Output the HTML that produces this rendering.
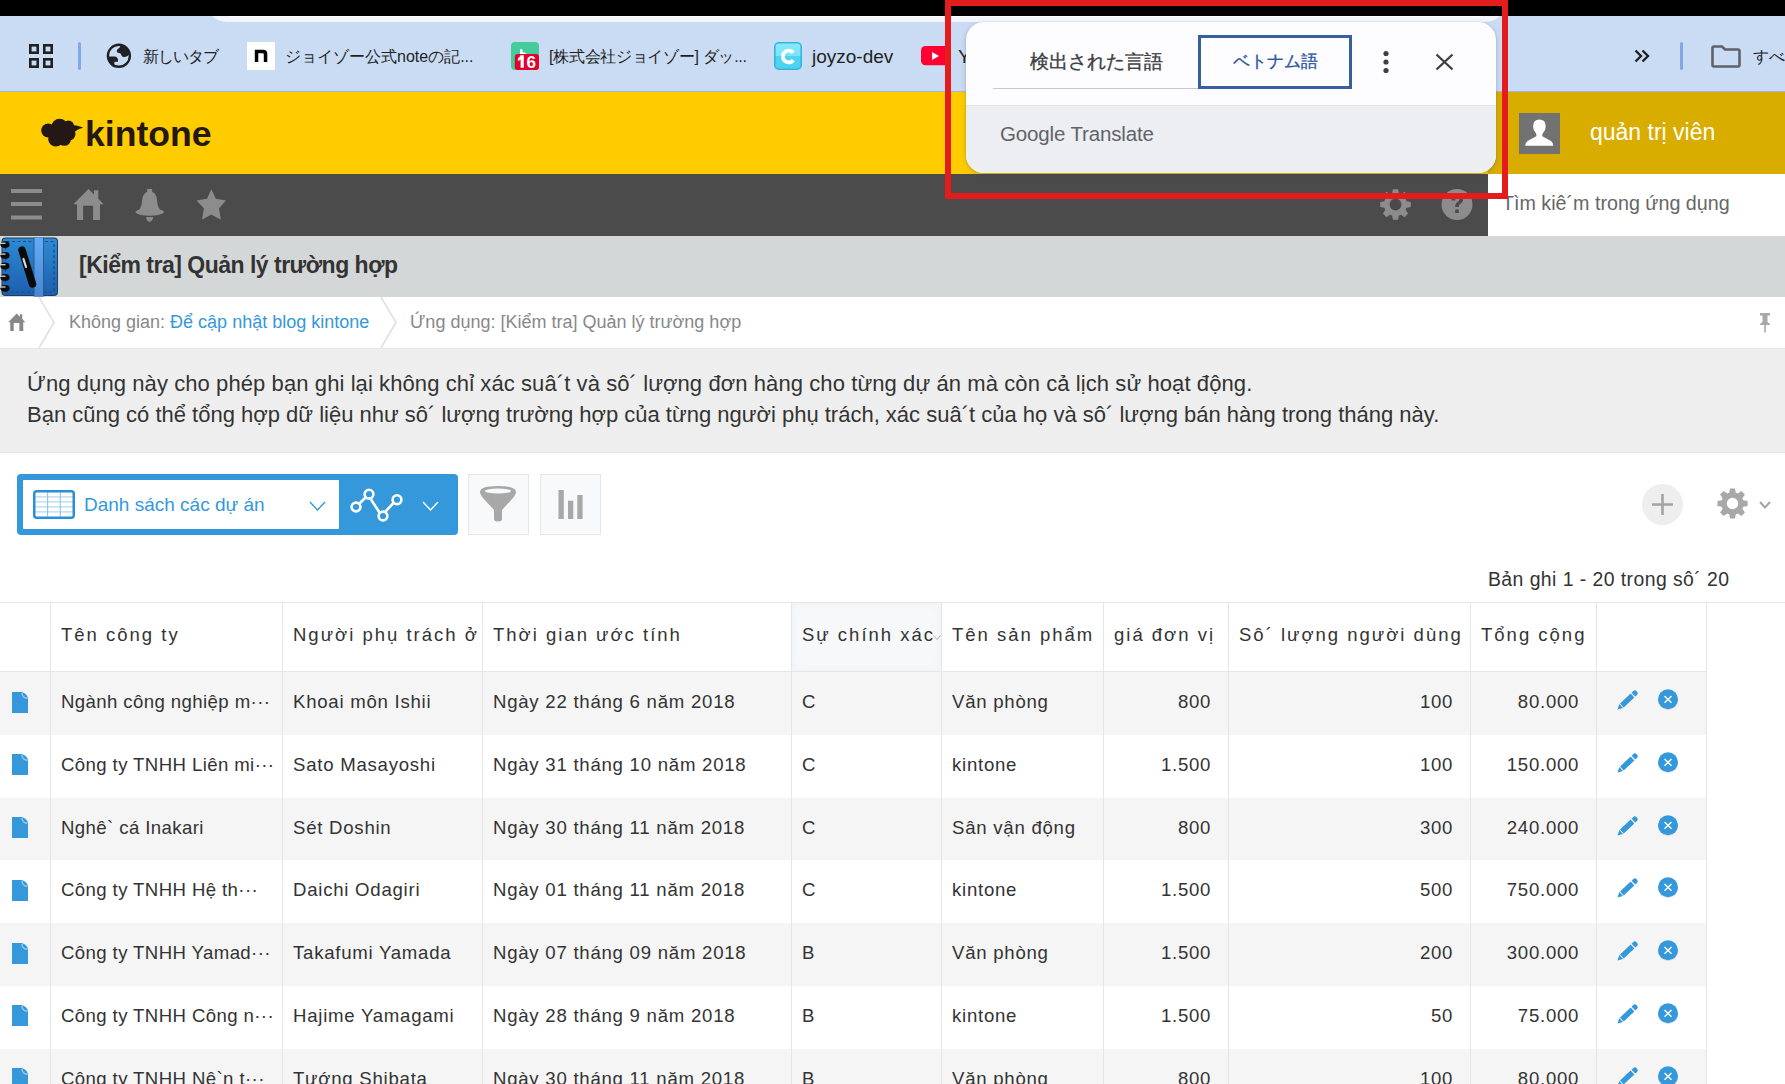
<!DOCTYPE html>
<html><head><meta charset="utf-8">
<style>
*{box-sizing:border-box}
html,body{margin:0;padding:0}
body{width:1785px;height:1084px;overflow:hidden;position:relative;background:#fff;font-family:"Liberation Sans",sans-serif;color:#333}
.a{position:absolute}
.nw{white-space:nowrap}
svg{display:block}
</style></head><body>

<!-- browser chrome -->
<div class="a" style="left:0;top:0;width:1785px;height:16px;background:#000"></div>
<div class="a" style="left:0;top:16px;width:1785px;height:76px;background:#cadbf4;border-bottom:1px solid #a3b4dc"></div>
<!-- active tab bottom strip -->
<div class="a" style="left:228px;top:16px;width:1256px;height:6px;background:#f2f5fb;border-top:1px solid #fff"></div>
<svg class="a" style="left:212px;top:16px" width="17" height="7"><path d="M0 0 H17 V6 Q6 6 0 0Z" fill="#f2f5fb"/></svg>
<svg class="a" style="left:1483px;top:16px" width="17" height="7"><path d="M0 0 H17 Q11 6 0 6Z" fill="#f2f5fb"/></svg>

<!-- apps grid -->
<svg class="a" style="left:29px;top:44px" width="24" height="24"><g fill="none" stroke="#202124" stroke-width="2.6"><rect x="1.3" y="1.3" width="7.4" height="7.4"/><rect x="15.3" y="1.3" width="7.4" height="7.4"/><rect x="1.3" y="15.3" width="7.4" height="7.4"/><rect x="15.3" y="15.3" width="7.4" height="7.4"/></g></svg>
<div class="a" style="left:78px;top:42px;width:3px;height:28px;border-radius:2px;background:#7fa8ea"></div>
<!-- globe -->
<svg class="a" style="left:106px;top:43px" width="26" height="26"><circle cx="12.9" cy="12.8" r="11" fill="none" stroke="#202124" stroke-width="2.4"/><path d="M14.5 2 Q14.5 4.5 12.5 5.5 Q10.5 6.5 10.8 8.5 Q11 10 13.5 10 Q15 10.3 15.5 12.5 Q16.5 14.5 19 14 Q22 13.5 24 10.5 Q22 3.5 14.5 2Z" fill="#202124"/><path d="M1.3 13.5 H8.5 Q12 13.8 12 17.5 V18.8 H9 Q8.3 18.8 8.3 20 V24.5 Q2.5 21.5 1.3 13.5Z" fill="#202124"/></svg>
<div class="a nw" style="left:143px;top:44px;font-size:16px;letter-spacing:-1px;line-height:26px;color:#1f1f1f">新しいタブ</div>
<!-- note icon -->
<div class="a" style="left:247px;top:42px;width:28px;height:28px;background:#fff"></div>
<svg class="a" style="left:247px;top:42px" width="28" height="28"><path d="M7.8 20 V7.8 H16 Q20.3 7.8 20.3 12 V20 H16.8 V12.6 Q16.8 11.3 15.5 11.3 H11.3 V20Z" fill="#000"/></svg>
<div class="a nw" style="left:285px;top:44px;font-size:16px;line-height:26px;color:#1f1f1f">ジョイゾー公式noteの記...</div>
<!-- 16 icon -->
<svg class="a" style="left:511px;top:42px" width="28" height="28"><rect x="0" y="0" width="28" height="28" rx="4" fill="#44cc9c"/><path d="M9 7.2 H11.5 V10 Q14.5 10.5 17 12.5 H9Z" fill="#fff"/><rect x="3.8" y="12" width="24.2" height="16" rx="3" fill="#e5002b"/><path d="M9.5 13.2 H12.8 V25.7 H9.6 V17.5 Q8.3 18.5 6.9 19 V16.3 Q8.8 15.3 9.5 13.2Z" fill="#fff"/><text x="20.3" y="25.8" style="font-family:'Liberation Sans';font-weight:bold" font-size="17" fill="#fff" text-anchor="middle">6</text></svg>
<div class="a nw" style="left:549px;top:44px;font-size:16px;letter-spacing:-0.3px;line-height:26px;color:#1f1f1f">[株式会社ジョイゾー] ダッ...</div>
<!-- C icon -->
<svg class="a" style="left:774px;top:42px" width="28" height="28"><defs><linearGradient id="cg" x1="0" y1="0" x2="0" y2="1"><stop offset="0" stop-color="#86e8fb"/><stop offset="0.5" stop-color="#7fe2f7"/><stop offset="0.5" stop-color="#4fd5f1"/><stop offset="1" stop-color="#4cd3ef"/></linearGradient></defs><rect x="0.8" y="0.8" width="26.4" height="26.4" rx="4" fill="url(#cg)" stroke="#35b6d6" stroke-width="1.6"/><path d="M19.3 10.8 A5.9 5.9 0 1 0 19.3 18.2" fill="none" stroke="#fff" stroke-width="3.8"/></svg>
<div class="a nw" style="left:812px;top:44px;font-size:19px;line-height:26px;color:#1f1f1f">joyzo-dev</div>
<!-- youtube -->
<svg class="a" style="left:921px;top:46px" width="28" height="20"><rect width="28" height="19.3" rx="4.5" fill="#ff0033"/><path d="M11 6 V14 L18 10Z" fill="#fff"/></svg>
<div class="a nw" style="left:958px;top:44px;font-size:19px;line-height:26px;color:#1f1f1f">Y</div>
<!-- right side -->
<svg class="a" style="left:1634px;top:49px" width="17" height="14"><path d="M1.5 1.5 L7 7 L1.5 12.5 M8.5 1.5 L14 7 L8.5 12.5" fill="none" stroke="#202124" stroke-width="2.4"/></svg>
<div class="a" style="left:1680px;top:42px;width:3px;height:28px;border-radius:2px;background:#7fa8ea"></div>
<svg class="a" style="left:1711px;top:45px" width="30" height="23"><path d="M1.5 3 Q1.5 1.5 3 1.5 H11 L14 4.5 H27 Q28.5 4.5 28.5 6 V20 Q28.5 21.5 27 21.5 H3 Q1.5 21.5 1.5 20Z" fill="none" stroke="#5f6368" stroke-width="2.6"/></svg>
<div class="a nw" style="left:1753px;top:44px;font-size:16px;line-height:26px;color:#1f1f1f">すべ</div>


<!-- kintone header -->
<div class="a" style="left:0;top:92px;width:1785px;height:82px;background:#ffcc00"></div>
<div class="a" style="left:1488px;top:92px;width:297px;height:82px;background:#d8ad00"></div>
<svg class="a" style="left:40px;top:117px" width="46" height="32"><g fill="#231815"><circle cx="8.2" cy="13.5" r="7"/><circle cx="19.6" cy="9.8" r="8.1"/><circle cx="28.5" cy="9" r="5.5"/><circle cx="29.2" cy="17.1" r="6.3"/><circle cx="15.9" cy="21.9" r="7.7"/><circle cx="24.4" cy="22.3" r="6.5"/><circle cx="20" cy="16" r="9"/><path d="M30 7.5 Q38 8.6 43.2 10.5 Q38 11.5 33 16Z"/></g></svg>
<div class="a nw" style="left:85px;top:112px;font-size:35.6px;font-weight:bold;line-height:44px;color:#231815">kintone</div>
<!-- user -->
<div class="a" style="left:1519px;top:113px;width:41px;height:41px;background:#717271;overflow:hidden"><svg width="41" height="41"><path d="M20.4 6.6 Q26.7 6.6 26.7 13.5 Q26.7 17.5 24 20 Q23 21.2 23.3 23.3 L32 28 Q34.2 29.5 34.2 32.7 H6.2 Q6.2 29.5 8.6 28 L17.3 23.3 Q17.8 21.2 16.8 20 Q14.1 17.5 14.1 13.5 Q14.1 6.6 20.4 6.6Z" fill="#fff"/></svg></div>
<div class="a nw" style="left:1590px;top:118px;font-size:23px;line-height:28px;color:#fff">quản trị viên</div>

<!-- nav -->
<div class="a" style="left:0;top:174px;width:1488px;height:62px;background:#4b4b4b"></div>
<div class="a" style="left:1488px;top:174px;width:297px;height:62px;background:#fff"></div>
<svg class="a" style="left:11px;top:188px" width="32" height="33"><g fill="#8c8c8c"><rect x="0" y="1" width="31" height="4"/><rect x="0" y="14" width="31" height="4"/><rect x="0" y="27.5" width="31" height="4"/></g></svg>
<svg class="a" style="left:73px;top:188px" width="31" height="33"><path d="M15.5 1 L21 6.5 V2.3 H25.3 V10.8 L30.7 16.2 H27 V32 H20.1 V17.8 H10.1 V32 H4 V16.2 H0.3Z" fill="#8c8c8c"/></svg>
<svg class="a" style="left:135px;top:188px" width="30" height="35"><path transform="scale(1 1.07)" d="M12.2 1 H17.1 V3.4 Q21.5 5 22 11 Q22.5 18 25 20 Q29.5 21.5 29 23 Q25 26 14.6 26 Q4.2 26 0.3 23 Q0 21.5 4.2 20 Q6.7 18 7.2 11 Q7.7 5 12.2 3.4Z M11 27 H18.2 Q17.5 31.5 14.6 31.5 Q11.7 31.5 11 27Z" fill="#8c8c8c"/></svg>
<svg class="a" style="left:196px;top:188px" width="31" height="33"><path d="M15.3 1.2 L19.9 10.8 L30 12.6 L23 20.3 L24.8 31.7 L15.3 26.5 L6 31.7 L7.9 20.3 L0.5 12.6 L11 10.8Z" fill="#8c8c8c"/></svg>
<svg class="a" style="left:1379px;top:188px" width="33" height="33"><path d="M13.15 5.39 L13.91 1.22 L19.09 1.22 L19.85 5.39 A11.6 11.6 0 0 1 21.98 6.28 L25.48 3.86 L29.14 7.52 L26.72 11.02 A11.6 11.6 0 0 1 27.61 13.15 L31.78 13.91 L31.78 19.09 L27.61 19.85 A11.6 11.6 0 0 1 26.72 21.98 L29.14 25.48 L25.48 29.14 L21.98 26.72 A11.6 11.6 0 0 1 19.85 27.61 L19.09 31.78 L13.91 31.78 L13.15 27.61 A11.6 11.6 0 0 1 11.02 26.72 L7.52 29.14 L3.86 25.48 L6.28 21.98 A11.6 11.6 0 0 1 5.39 19.85 L1.22 19.09 L1.22 13.91 L5.39 13.15 A11.6 11.6 0 0 1 6.28 11.02 L3.86 7.52 L7.52 3.86 L11.02 6.28 A11.6 11.6 0 0 1 13.15 5.39Z M22.4 16.5 A5.9 5.9 0 1 0 10.6 16.5 A5.9 5.9 0 1 0 22.4 16.5Z" fill="#8c8c8c" fill-rule="evenodd"/></svg>
<svg class="a" style="left:1441px;top:188px" width="33" height="33"><circle cx="16" cy="16.5" r="15.5" fill="#8c8c8c"/><path d="M10.5 12.5 Q10.5 6.5 16.5 6.5 Q22 6.5 22 11.5 Q22 14.5 19 16 Q17.8 16.8 17.8 19 H14.2 Q14.2 15.2 16.5 14 Q18.3 13 18.3 11.5 Q18.3 9.8 16.3 9.8 Q14.2 9.8 14.2 12.5Z M14.2 21.5 H17.8 V25 H14.2Z" fill="#4b4b4b"/></svg>
<div class="a nw" style="left:1502px;top:190px;font-size:19.7px;line-height:26px;color:#666">Tìm kiê´m trong ứng dụng</div>

<!-- title bar -->
<div class="a" style="left:0;top:236px;width:1785px;height:61px;background:#d4d7d8"></div>
<svg class="a" style="left:0;top:237px" width="59" height="60" viewBox="0 0 59 60">
<defs><linearGradient id="nb" x1="0" y1="0" x2="0" y2="1"><stop offset="0" stop-color="#2d8ad3"/><stop offset="1" stop-color="#1d5fae"/></linearGradient>
<linearGradient id="st" x1="0" y1="0" x2="0" y2="1"><stop offset="0" stop-color="#62adf7"/><stop offset="1" stop-color="#4a86d2"/></linearGradient></defs>
<rect x="1.5" y="0.5" width="56.5" height="58.5" rx="4" fill="#1f3d60"/>
<rect x="2.5" y="1.5" width="54.5" height="56.5" rx="3" fill="url(#nb)"/>
<rect x="5.5" y="4.5" width="48.5" height="50.5" rx="1" fill="none" stroke="#174a82" stroke-width="1.2" stroke-dasharray="3 2.5"/>
<rect x="33.5" y="0.5" width="10.5" height="59" fill="#2a5a90"/>
<rect x="34.5" y="0.5" width="8.5" height="59" fill="url(#st)"/>
<path d="M22 13 L32.5 47" stroke="#0a0a0a" stroke-width="7.5" stroke-linecap="round"/><path d="M23.5 22 L26 30" stroke="#f0f0f0" stroke-width="2.2" stroke-linecap="round" opacity="0.9"/>
<g fill="#0d0d0d"><ellipse cx="5" cy="7.6" rx="4.6" ry="3.4"/><ellipse cx="5" cy="18.4" rx="4.6" ry="3.4"/><ellipse cx="5" cy="29" rx="4.6" ry="3.4"/><ellipse cx="5" cy="40.5" rx="4.6" ry="3.4"/><ellipse cx="5" cy="51.3" rx="4.6" ry="3.4"/></g>
<g fill="none" stroke="#d8d8d8" stroke-width="1.3"><path d="M0 6.3 H5.5"/><path d="M0 17.1 H5.5"/><path d="M0 27.7 H5.5"/><path d="M0 39.2 H5.5"/><path d="M0 50 H5.5"/></g>
</svg>
<div class="a nw" style="left:79px;top:250px;font-size:23px;font-weight:bold;letter-spacing:-0.5px;line-height:30px;color:#333">[Kiểm tra] Quản lý trường hợp</div>

<!-- breadcrumb -->
<div class="a" style="left:0;top:297px;width:1785px;height:52px;background:#fff;border-bottom:1px solid #e3e7e8"></div>
<svg class="a" style="left:8px;top:313px" width="18" height="20"><path transform="scale(0.565)" d="M15.5 1 L21 6.5 V2.3 H25.3 V10.8 L30.7 16.2 H27 V32 H20.1 V17.8 H10.1 V32 H4 V16.2 H0.3Z" fill="#888"/></svg>
<svg class="a" style="left:38px;top:297px" width="18" height="52"><path d="M1 0 L16 25.5 L1 51" fill="none" stroke="#dfe3e4" stroke-width="1.7"/></svg>
<div class="a nw" style="left:69px;top:310px;font-size:18px;line-height:24px;color:#888">Không gian: <span style="color:#3498db">Để cập nhật blog kintone</span></div>
<svg class="a" style="left:380px;top:297px" width="18" height="52"><path d="M1 0 L16 25.5 L1 51" fill="none" stroke="#dfe3e4" stroke-width="1.7"/></svg>
<div class="a nw" style="left:410px;top:310px;font-size:18px;line-height:24px;color:#888">Ứng dụng: [Kiểm tra] Quản lý trường hợp</div>
<svg class="a" style="left:1760px;top:313px" width="10" height="20"><path d="M0 0 H10 V2.5 H7.5 V9 L10 11 V12 H5.8 V19.5 H4.2 V12 H0 V11 L2.5 9 V2.5 H0Z" fill="#a8a8a8"/></svg>

<!-- description -->
<div class="a" style="left:0;top:349px;width:1785px;height:104px;background:#eeeeee;border-bottom:1px solid #e3e7e8"></div>
<div class="a nw" style="left:27px;top:368px;font-size:22px;line-height:31px;color:#333"><span style="letter-spacing:0.09px">Ứng dụng này cho phép bạn ghi lại không chỉ xác suâ´t và sô´ lượng đơn hàng cho từng dự án mà còn cả lịch sử hoạt động.</span><br>Bạn cũng có thể tổng hợp dữ liệu như sô´ lượng trường hợp của từng người phụ trách, xác suâ´t của họ và sô´ lượng bán hàng trong tháng này.</div>


<!-- toolbar -->
<div class="a" style="left:17px;top:474px;width:441px;height:61px;background:#3498db;border-radius:4px"></div>
<div class="a" style="left:23px;top:480px;width:316px;height:49px;background:#fff;border-radius:1px"></div>
<svg class="a" style="left:33px;top:490px" width="42" height="29"><g stroke="#b3d7f0" stroke-width="1.3"><path d="M2 6.9 H40 M2 11.9 H40 M2 16.9 H40 M2 21.9 H40"/></g><g stroke="#8fc4ec" stroke-width="1.1"><path d="M14.6 2 V27 M27.3 2 V27"/></g><rect x="1.25" y="1.25" width="39.5" height="26.5" rx="2.5" fill="none" stroke="#2a8fd8" stroke-width="2.5"/></svg>
<div class="a nw" style="left:84px;top:492px;font-size:19px;line-height:26px;color:#3498db">Danh sách các dự án</div>
<svg class="a" style="left:309px;top:501px" width="17" height="10"><path d="M1 1 L8.5 9 L16 1" fill="none" stroke="#3498db" stroke-width="1.4"/></svg>
<svg class="a" style="left:349px;top:488px" width="55" height="35"><g fill="none" stroke="#fff" stroke-width="2.6"><path d="M10 16 L16.5 9.5 M22 11.5 L30.5 24.5 M36.5 23.5 L44.5 15"/><circle cx="7" cy="19" r="4.4"/><circle cx="20" cy="6.2" r="4.4"/><circle cx="34" cy="28" r="4.4"/><circle cx="48" cy="11.7" r="4.4"/></g></svg>
<svg class="a" style="left:422px;top:501px" width="17" height="10"><path d="M1 1 L8.5 9 L16 1" fill="none" stroke="#fff" stroke-width="1.4"/></svg>
<div class="a" style="left:468px;top:474px;width:61px;height:61px;background:#f7f9fa;border:1px solid #e3e7e8"></div>
<svg class="a" style="left:479px;top:485px" width="38" height="38"><path d="M1 7 Q1 1 19 1 Q37 1 37 7 Q37 9 34 13 L23 25 V34 Q23 36.5 19 36.5 Q15 36.5 15 34 V25 L4 13 Q1 9 1 7Z" fill="#a8a8a8"/><ellipse cx="19" cy="6" rx="13" ry="2.6" fill="#f7f9fa"/></svg>
<div class="a" style="left:540px;top:474px;width:61px;height:61px;background:#f7f9fa;border:1px solid #e3e7e8"></div>
<svg class="a" style="left:558px;top:489px" width="25" height="31"><g fill="#a8a8a8"><rect x="0.5" y="1" width="5.3" height="29"/><rect x="10" y="11.7" width="5.3" height="18.3"/><rect x="19.3" y="6" width="5.3" height="24"/></g></svg>
<div class="a" style="left:1642px;top:484px;width:41px;height:41px;border-radius:50%;background:#eeeeee"></div>
<svg class="a" style="left:1652px;top:494px" width="21" height="21"><path d="M10.5 0 V21 M0 10.5 H21" stroke="#a3a3a3" stroke-width="2.6"/></svg>
<svg class="a" style="left:1716px;top:487px" width="33" height="33"><path d="M13.25 5.78 L14.01 1.40 L18.99 1.40 L19.75 5.78 A11.2 11.2 0 0 1 21.78 6.62 L25.41 4.07 L28.93 7.59 L26.38 11.22 A11.2 11.2 0 0 1 27.22 13.25 L31.60 14.01 L31.60 18.99 L27.22 19.75 A11.2 11.2 0 0 1 26.38 21.78 L28.93 25.41 L25.41 28.93 L21.78 26.38 A11.2 11.2 0 0 1 19.75 27.22 L18.99 31.60 L14.01 31.60 L13.25 27.22 A11.2 11.2 0 0 1 11.22 26.38 L7.59 28.93 L4.07 25.41 L6.62 21.78 A11.2 11.2 0 0 1 5.78 19.75 L1.40 18.99 L1.40 14.01 L5.78 13.25 A11.2 11.2 0 0 1 6.62 11.22 L4.07 7.59 L7.59 4.07 L11.22 6.62 A11.2 11.2 0 0 1 13.25 5.78Z M22.2 16.5 A5.7 5.7 0 1 0 10.8 16.5 A5.7 5.7 0 1 0 22.2 16.5Z" fill="#a8a8a8" fill-rule="evenodd"/></svg>
<svg class="a" style="left:1759px;top:501px" width="12" height="8"><path d="M1 1 L6 6.5 L11 1" fill="none" stroke="#a3a3a3" stroke-width="2"/></svg>
<div class="a nw" style="left:1488px;top:566px;font-size:19.4px;letter-spacing:0.44px;line-height:26px;color:#333">Bản ghi 1 - 20 trong sô´ 20</div>

<!--TABLE-->
<div class="a" style="left:0;top:602px;width:1785px;height:1px;background:#e3e7e8"></div>
<div class="a" style="left:792px;top:603px;width:149px;height:68px;background:#f7f8fa;box-shadow:inset 0 0 8px #eef0f2"></div>
<div class="a" style="left:0;top:671px;width:1706px;height:1px;background:#e3e7e8"></div>
<div class="a" style="left:0;top:672.00px;width:1706px;height:62.75px;background:#f5f5f5"></div>
<div class="a" style="left:0;top:734.75px;width:1706px;height:62.75px;background:#fff"></div>
<div class="a" style="left:0;top:797.50px;width:1706px;height:62.75px;background:#f5f5f5"></div>
<div class="a" style="left:0;top:860.25px;width:1706px;height:62.75px;background:#fff"></div>
<div class="a" style="left:0;top:923.00px;width:1706px;height:62.75px;background:#f5f5f5"></div>
<div class="a" style="left:0;top:985.75px;width:1706px;height:62.75px;background:#fff"></div>
<div class="a" style="left:0;top:1048.50px;width:1706px;height:62.75px;background:#f5f5f5"></div>
<div class="a" style="left:50px;top:603px;width:1px;height:482px;background:#e3e7e8"></div>
<div class="a" style="left:282px;top:603px;width:1px;height:482px;background:#e3e7e8"></div>
<div class="a" style="left:482px;top:603px;width:1px;height:482px;background:#e3e7e8"></div>
<div class="a" style="left:791px;top:603px;width:1px;height:482px;background:#e3e7e8"></div>
<div class="a" style="left:941px;top:603px;width:1px;height:482px;background:#e3e7e8"></div>
<div class="a" style="left:1103px;top:603px;width:1px;height:482px;background:#e3e7e8"></div>
<div class="a" style="left:1228px;top:603px;width:1px;height:482px;background:#e3e7e8"></div>
<div class="a" style="left:1470px;top:603px;width:1px;height:482px;background:#e3e7e8"></div>
<div class="a" style="left:1596px;top:603px;width:1px;height:482px;background:#e3e7e8"></div>
<div class="a" style="left:1706px;top:603px;width:1px;height:482px;background:#e3e7e8"></div>
<div class="a nw" style="left:61px;top:623px;font-size:18.5px;letter-spacing:2px;line-height:24px;color:#333">Tên công ty</div>
<div class="a nw" style="left:293px;top:623px;font-size:18.5px;letter-spacing:2px;line-height:24px;color:#333">Người phụ trách ở</div>
<div class="a nw" style="left:493px;top:623px;font-size:18.5px;letter-spacing:2px;line-height:24px;color:#333">Thời gian ước tính</div>
<div class="a nw" style="left:802px;top:623px;font-size:18.5px;letter-spacing:2px;line-height:24px;color:#333">Sự chính xác</div>
<div class="a nw" style="left:952px;top:623px;font-size:18.5px;letter-spacing:2px;line-height:24px;color:#333">Tên sản phẩm</div>
<div class="a nw" style="left:1114px;top:623px;font-size:18.5px;letter-spacing:2px;line-height:24px;color:#333">giá đơn vị</div>
<div class="a nw" style="left:1239px;top:623px;font-size:18.5px;letter-spacing:2px;line-height:24px;color:#333">Sô´ lượng người dùng</div>
<div class="a nw" style="left:1481px;top:623px;font-size:18.5px;letter-spacing:2px;line-height:24px;color:#333">Tổng cộng</div>
<svg class="a" style="left:933px;top:635px" width="8" height="6"><path d="M0.5 0.5 L4 4.5 L7.5 0.5" fill="none" stroke="#b0b0b0" stroke-width="1"/></svg>
<svg class="a" style="left:12px;top:691.50px" width="17" height="22"><path d="M0 0 H9.5 Q15.5 1.5 16 6.5 V21 H0Z" fill="#3498db"/><path d="M9.8 1 Q10.5 6 15.5 6.3" fill="none" stroke="#9fcbef" stroke-width="1.4"/></svg>
<div class="a nw" style="left:61px;top:689.00px;font-size:18.6px;letter-spacing:0.4px;line-height:26px;color:#333">Ngành công nghiệp m···</div>
<div class="a nw" style="left:293px;top:689.00px;font-size:18.6px;letter-spacing:0.75px;line-height:26px;color:#333">Khoai môn Ishii</div>
<div class="a nw" style="left:493px;top:689.00px;font-size:18.6px;letter-spacing:0.75px;line-height:26px;color:#333">Ngày 22 tháng 6 năm 2018</div>
<div class="a nw" style="left:802px;top:689.00px;font-size:18.6px;letter-spacing:0.75px;line-height:26px;color:#333">C</div>
<div class="a nw" style="left:952px;top:689.00px;font-size:18.6px;letter-spacing:0.75px;line-height:26px;color:#333">Văn phòng</div>
<div class="a nw" style="right:573.8px;top:689.00px;font-size:18.6px;letter-spacing:0.75px;line-height:26px;color:#333">800</div>
<div class="a nw" style="right:331.8px;top:689.00px;font-size:18.6px;letter-spacing:0.75px;line-height:26px;color:#333">100</div>
<div class="a nw" style="right:205.8px;top:689.00px;font-size:18.6px;letter-spacing:0.75px;line-height:26px;color:#333">80.000</div>
<svg class="a" style="left:1614px;top:689.00px" width="28" height="24"><g transform="translate(3.5 20.5) rotate(-43)"><path d="M0 0 L5 -2.7 V2.7Z" fill="#3498db"/><rect x="6" y="-2.7" width="14.5" height="5.4" fill="#3498db"/><path d="M21.8 -2.7 H24.5 Q26.5 -2.7 26.5 0 Q26.5 2.7 24.5 2.7 H21.8Z" fill="#3498db"/></g></svg>
<svg class="a" style="left:1657px;top:689.00px" width="23" height="23"><circle cx="11" cy="11.2" r="10" fill="#c9b9a9" opacity="0.35"/><circle cx="11" cy="10.3" r="10" fill="#3498db"/><path d="M7.5 7 L14.5 13.7 M14.5 7 L7.5 13.7" stroke="#fff" stroke-width="1.4"/></svg>
<svg class="a" style="left:12px;top:754.25px" width="17" height="22"><path d="M0 0 H9.5 Q15.5 1.5 16 6.5 V21 H0Z" fill="#3498db"/><path d="M9.8 1 Q10.5 6 15.5 6.3" fill="none" stroke="#9fcbef" stroke-width="1.4"/></svg>
<div class="a nw" style="left:61px;top:751.75px;font-size:18.6px;letter-spacing:0.4px;line-height:26px;color:#333">Công ty TNHH Liên mi···</div>
<div class="a nw" style="left:293px;top:751.75px;font-size:18.6px;letter-spacing:0.75px;line-height:26px;color:#333">Sato Masayoshi</div>
<div class="a nw" style="left:493px;top:751.75px;font-size:18.6px;letter-spacing:0.75px;line-height:26px;color:#333">Ngày 31 tháng 10 năm 2018</div>
<div class="a nw" style="left:802px;top:751.75px;font-size:18.6px;letter-spacing:0.75px;line-height:26px;color:#333">C</div>
<div class="a nw" style="left:952px;top:751.75px;font-size:18.6px;letter-spacing:0.75px;line-height:26px;color:#333">kintone</div>
<div class="a nw" style="right:573.8px;top:751.75px;font-size:18.6px;letter-spacing:0.75px;line-height:26px;color:#333">1.500</div>
<div class="a nw" style="right:331.8px;top:751.75px;font-size:18.6px;letter-spacing:0.75px;line-height:26px;color:#333">100</div>
<div class="a nw" style="right:205.8px;top:751.75px;font-size:18.6px;letter-spacing:0.75px;line-height:26px;color:#333">150.000</div>
<svg class="a" style="left:1614px;top:751.75px" width="28" height="24"><g transform="translate(3.5 20.5) rotate(-43)"><path d="M0 0 L5 -2.7 V2.7Z" fill="#3498db"/><rect x="6" y="-2.7" width="14.5" height="5.4" fill="#3498db"/><path d="M21.8 -2.7 H24.5 Q26.5 -2.7 26.5 0 Q26.5 2.7 24.5 2.7 H21.8Z" fill="#3498db"/></g></svg>
<svg class="a" style="left:1657px;top:751.75px" width="23" height="23"><circle cx="11" cy="11.2" r="10" fill="#c9b9a9" opacity="0.35"/><circle cx="11" cy="10.3" r="10" fill="#3498db"/><path d="M7.5 7 L14.5 13.7 M14.5 7 L7.5 13.7" stroke="#fff" stroke-width="1.4"/></svg>
<svg class="a" style="left:12px;top:817.00px" width="17" height="22"><path d="M0 0 H9.5 Q15.5 1.5 16 6.5 V21 H0Z" fill="#3498db"/><path d="M9.8 1 Q10.5 6 15.5 6.3" fill="none" stroke="#9fcbef" stroke-width="1.4"/></svg>
<div class="a nw" style="left:61px;top:814.50px;font-size:18.6px;letter-spacing:0.4px;line-height:26px;color:#333">Nghê` cá Inakari</div>
<div class="a nw" style="left:293px;top:814.50px;font-size:18.6px;letter-spacing:0.75px;line-height:26px;color:#333">Sét Doshin</div>
<div class="a nw" style="left:493px;top:814.50px;font-size:18.6px;letter-spacing:0.75px;line-height:26px;color:#333">Ngày 30 tháng 11 năm 2018</div>
<div class="a nw" style="left:802px;top:814.50px;font-size:18.6px;letter-spacing:0.75px;line-height:26px;color:#333">C</div>
<div class="a nw" style="left:952px;top:814.50px;font-size:18.6px;letter-spacing:0.75px;line-height:26px;color:#333">Sân vận động</div>
<div class="a nw" style="right:573.8px;top:814.50px;font-size:18.6px;letter-spacing:0.75px;line-height:26px;color:#333">800</div>
<div class="a nw" style="right:331.8px;top:814.50px;font-size:18.6px;letter-spacing:0.75px;line-height:26px;color:#333">300</div>
<div class="a nw" style="right:205.8px;top:814.50px;font-size:18.6px;letter-spacing:0.75px;line-height:26px;color:#333">240.000</div>
<svg class="a" style="left:1614px;top:814.50px" width="28" height="24"><g transform="translate(3.5 20.5) rotate(-43)"><path d="M0 0 L5 -2.7 V2.7Z" fill="#3498db"/><rect x="6" y="-2.7" width="14.5" height="5.4" fill="#3498db"/><path d="M21.8 -2.7 H24.5 Q26.5 -2.7 26.5 0 Q26.5 2.7 24.5 2.7 H21.8Z" fill="#3498db"/></g></svg>
<svg class="a" style="left:1657px;top:814.50px" width="23" height="23"><circle cx="11" cy="11.2" r="10" fill="#c9b9a9" opacity="0.35"/><circle cx="11" cy="10.3" r="10" fill="#3498db"/><path d="M7.5 7 L14.5 13.7 M14.5 7 L7.5 13.7" stroke="#fff" stroke-width="1.4"/></svg>
<svg class="a" style="left:12px;top:879.75px" width="17" height="22"><path d="M0 0 H9.5 Q15.5 1.5 16 6.5 V21 H0Z" fill="#3498db"/><path d="M9.8 1 Q10.5 6 15.5 6.3" fill="none" stroke="#9fcbef" stroke-width="1.4"/></svg>
<div class="a nw" style="left:61px;top:877.25px;font-size:18.6px;letter-spacing:0.4px;line-height:26px;color:#333">Công ty TNHH Hệ th···</div>
<div class="a nw" style="left:293px;top:877.25px;font-size:18.6px;letter-spacing:0.75px;line-height:26px;color:#333">Daichi Odagiri</div>
<div class="a nw" style="left:493px;top:877.25px;font-size:18.6px;letter-spacing:0.75px;line-height:26px;color:#333">Ngày 01 tháng 11 năm 2018</div>
<div class="a nw" style="left:802px;top:877.25px;font-size:18.6px;letter-spacing:0.75px;line-height:26px;color:#333">C</div>
<div class="a nw" style="left:952px;top:877.25px;font-size:18.6px;letter-spacing:0.75px;line-height:26px;color:#333">kintone</div>
<div class="a nw" style="right:573.8px;top:877.25px;font-size:18.6px;letter-spacing:0.75px;line-height:26px;color:#333">1.500</div>
<div class="a nw" style="right:331.8px;top:877.25px;font-size:18.6px;letter-spacing:0.75px;line-height:26px;color:#333">500</div>
<div class="a nw" style="right:205.8px;top:877.25px;font-size:18.6px;letter-spacing:0.75px;line-height:26px;color:#333">750.000</div>
<svg class="a" style="left:1614px;top:877.25px" width="28" height="24"><g transform="translate(3.5 20.5) rotate(-43)"><path d="M0 0 L5 -2.7 V2.7Z" fill="#3498db"/><rect x="6" y="-2.7" width="14.5" height="5.4" fill="#3498db"/><path d="M21.8 -2.7 H24.5 Q26.5 -2.7 26.5 0 Q26.5 2.7 24.5 2.7 H21.8Z" fill="#3498db"/></g></svg>
<svg class="a" style="left:1657px;top:877.25px" width="23" height="23"><circle cx="11" cy="11.2" r="10" fill="#c9b9a9" opacity="0.35"/><circle cx="11" cy="10.3" r="10" fill="#3498db"/><path d="M7.5 7 L14.5 13.7 M14.5 7 L7.5 13.7" stroke="#fff" stroke-width="1.4"/></svg>
<svg class="a" style="left:12px;top:942.50px" width="17" height="22"><path d="M0 0 H9.5 Q15.5 1.5 16 6.5 V21 H0Z" fill="#3498db"/><path d="M9.8 1 Q10.5 6 15.5 6.3" fill="none" stroke="#9fcbef" stroke-width="1.4"/></svg>
<div class="a nw" style="left:61px;top:940.00px;font-size:18.6px;letter-spacing:0.4px;line-height:26px;color:#333">Công ty TNHH Yamad···</div>
<div class="a nw" style="left:293px;top:940.00px;font-size:18.6px;letter-spacing:0.75px;line-height:26px;color:#333">Takafumi Yamada</div>
<div class="a nw" style="left:493px;top:940.00px;font-size:18.6px;letter-spacing:0.75px;line-height:26px;color:#333">Ngày 07 tháng 09 năm 2018</div>
<div class="a nw" style="left:802px;top:940.00px;font-size:18.6px;letter-spacing:0.75px;line-height:26px;color:#333">B</div>
<div class="a nw" style="left:952px;top:940.00px;font-size:18.6px;letter-spacing:0.75px;line-height:26px;color:#333">Văn phòng</div>
<div class="a nw" style="right:573.8px;top:940.00px;font-size:18.6px;letter-spacing:0.75px;line-height:26px;color:#333">1.500</div>
<div class="a nw" style="right:331.8px;top:940.00px;font-size:18.6px;letter-spacing:0.75px;line-height:26px;color:#333">200</div>
<div class="a nw" style="right:205.8px;top:940.00px;font-size:18.6px;letter-spacing:0.75px;line-height:26px;color:#333">300.000</div>
<svg class="a" style="left:1614px;top:940.00px" width="28" height="24"><g transform="translate(3.5 20.5) rotate(-43)"><path d="M0 0 L5 -2.7 V2.7Z" fill="#3498db"/><rect x="6" y="-2.7" width="14.5" height="5.4" fill="#3498db"/><path d="M21.8 -2.7 H24.5 Q26.5 -2.7 26.5 0 Q26.5 2.7 24.5 2.7 H21.8Z" fill="#3498db"/></g></svg>
<svg class="a" style="left:1657px;top:940.00px" width="23" height="23"><circle cx="11" cy="11.2" r="10" fill="#c9b9a9" opacity="0.35"/><circle cx="11" cy="10.3" r="10" fill="#3498db"/><path d="M7.5 7 L14.5 13.7 M14.5 7 L7.5 13.7" stroke="#fff" stroke-width="1.4"/></svg>
<svg class="a" style="left:12px;top:1005.25px" width="17" height="22"><path d="M0 0 H9.5 Q15.5 1.5 16 6.5 V21 H0Z" fill="#3498db"/><path d="M9.8 1 Q10.5 6 15.5 6.3" fill="none" stroke="#9fcbef" stroke-width="1.4"/></svg>
<div class="a nw" style="left:61px;top:1002.75px;font-size:18.6px;letter-spacing:0.4px;line-height:26px;color:#333">Công ty TNHH Công n···</div>
<div class="a nw" style="left:293px;top:1002.75px;font-size:18.6px;letter-spacing:0.75px;line-height:26px;color:#333">Hajime Yamagami</div>
<div class="a nw" style="left:493px;top:1002.75px;font-size:18.6px;letter-spacing:0.75px;line-height:26px;color:#333">Ngày 28 tháng 9 năm 2018</div>
<div class="a nw" style="left:802px;top:1002.75px;font-size:18.6px;letter-spacing:0.75px;line-height:26px;color:#333">B</div>
<div class="a nw" style="left:952px;top:1002.75px;font-size:18.6px;letter-spacing:0.75px;line-height:26px;color:#333">kintone</div>
<div class="a nw" style="right:573.8px;top:1002.75px;font-size:18.6px;letter-spacing:0.75px;line-height:26px;color:#333">1.500</div>
<div class="a nw" style="right:331.8px;top:1002.75px;font-size:18.6px;letter-spacing:0.75px;line-height:26px;color:#333">50</div>
<div class="a nw" style="right:205.8px;top:1002.75px;font-size:18.6px;letter-spacing:0.75px;line-height:26px;color:#333">75.000</div>
<svg class="a" style="left:1614px;top:1002.75px" width="28" height="24"><g transform="translate(3.5 20.5) rotate(-43)"><path d="M0 0 L5 -2.7 V2.7Z" fill="#3498db"/><rect x="6" y="-2.7" width="14.5" height="5.4" fill="#3498db"/><path d="M21.8 -2.7 H24.5 Q26.5 -2.7 26.5 0 Q26.5 2.7 24.5 2.7 H21.8Z" fill="#3498db"/></g></svg>
<svg class="a" style="left:1657px;top:1002.75px" width="23" height="23"><circle cx="11" cy="11.2" r="10" fill="#c9b9a9" opacity="0.35"/><circle cx="11" cy="10.3" r="10" fill="#3498db"/><path d="M7.5 7 L14.5 13.7 M14.5 7 L7.5 13.7" stroke="#fff" stroke-width="1.4"/></svg>
<svg class="a" style="left:12px;top:1068.00px" width="17" height="22"><path d="M0 0 H9.5 Q15.5 1.5 16 6.5 V21 H0Z" fill="#3498db"/><path d="M9.8 1 Q10.5 6 15.5 6.3" fill="none" stroke="#9fcbef" stroke-width="1.4"/></svg>
<div class="a nw" style="left:61px;top:1065.50px;font-size:18.6px;letter-spacing:0.4px;line-height:26px;color:#333">Công ty TNHH Nê`n t···</div>
<div class="a nw" style="left:293px;top:1065.50px;font-size:18.6px;letter-spacing:0.75px;line-height:26px;color:#333">Tướng Shibata</div>
<div class="a nw" style="left:493px;top:1065.50px;font-size:18.6px;letter-spacing:0.75px;line-height:26px;color:#333">Ngày 30 tháng 11 năm 2018</div>
<div class="a nw" style="left:802px;top:1065.50px;font-size:18.6px;letter-spacing:0.75px;line-height:26px;color:#333">B</div>
<div class="a nw" style="left:952px;top:1065.50px;font-size:18.6px;letter-spacing:0.75px;line-height:26px;color:#333">Văn phòng</div>
<div class="a nw" style="right:573.8px;top:1065.50px;font-size:18.6px;letter-spacing:0.75px;line-height:26px;color:#333">800</div>
<div class="a nw" style="right:331.8px;top:1065.50px;font-size:18.6px;letter-spacing:0.75px;line-height:26px;color:#333">100</div>
<div class="a nw" style="right:205.8px;top:1065.50px;font-size:18.6px;letter-spacing:0.75px;line-height:26px;color:#333">80.000</div>
<svg class="a" style="left:1614px;top:1065.50px" width="28" height="24"><g transform="translate(3.5 20.5) rotate(-43)"><path d="M0 0 L5 -2.7 V2.7Z" fill="#3498db"/><rect x="6" y="-2.7" width="14.5" height="5.4" fill="#3498db"/><path d="M21.8 -2.7 H24.5 Q26.5 -2.7 26.5 0 Q26.5 2.7 24.5 2.7 H21.8Z" fill="#3498db"/></g></svg>
<svg class="a" style="left:1657px;top:1065.50px" width="23" height="23"><circle cx="11" cy="11.2" r="10" fill="#c9b9a9" opacity="0.35"/><circle cx="11" cy="10.3" r="10" fill="#3498db"/><path d="M7.5 7 L14.5 13.7 M14.5 7 L7.5 13.7" stroke="#fff" stroke-width="1.4"/></svg>
<!--/TABLE-->
<!--POPUP-->
<div class="a" style="left:966px;top:22px;width:530px;height:151px;border-radius:18px;background:#fdfcff;overflow:hidden;box-shadow:0 1px 3px rgba(60,64,67,.25),0 2px 6px rgba(60,64,67,.12)">
 <div class="a" style="left:0;top:83px;width:530px;height:68px;background:#edeef2;border-top:1px solid #e2e3e8"></div>
</div>
<div class="a nw" style="left:1030px;top:48px;font-size:19px;line-height:28px;color:#3c4043;-webkit-text-stroke:0.35px #3c4043">検出された言語</div>
<div class="a" style="left:993px;top:88px;width:206px;height:1px;background:#c7c9cf"></div>
<div class="a" style="left:1198px;top:35px;width:154px;height:54px;border:3px solid #3a5f9e;background:#fdfcff"></div>
<div class="a nw" style="left:1233px;top:48px;font-size:17px;line-height:28px;color:#2d56a0;-webkit-text-stroke:0.3px #2d56a0">ベトナム語</div>
<svg class="a" style="left:1381px;top:50px" width="10" height="24"><g fill="#3c4043"><circle cx="5" cy="3.5" r="2.6"/><circle cx="5" cy="12" r="2.6"/><circle cx="5" cy="20.5" r="2.6"/></g></svg>
<svg class="a" style="left:1435px;top:53px" width="19" height="18"><path d="M1.5 1.5 L17.5 16.5 M17.5 1.5 L1.5 16.5" stroke="#3c4043" stroke-width="2.3"/></svg>
<div class="a nw" style="left:1000px;top:120px;font-size:20.5px;letter-spacing:-0.15px;line-height:28px;color:#5f6368">Google Translate</div>
<!-- red box -->
<div class="a" style="left:945px;top:0;width:563px;height:199px;border:6.8px solid #e51c1c"></div>

</body></html>
